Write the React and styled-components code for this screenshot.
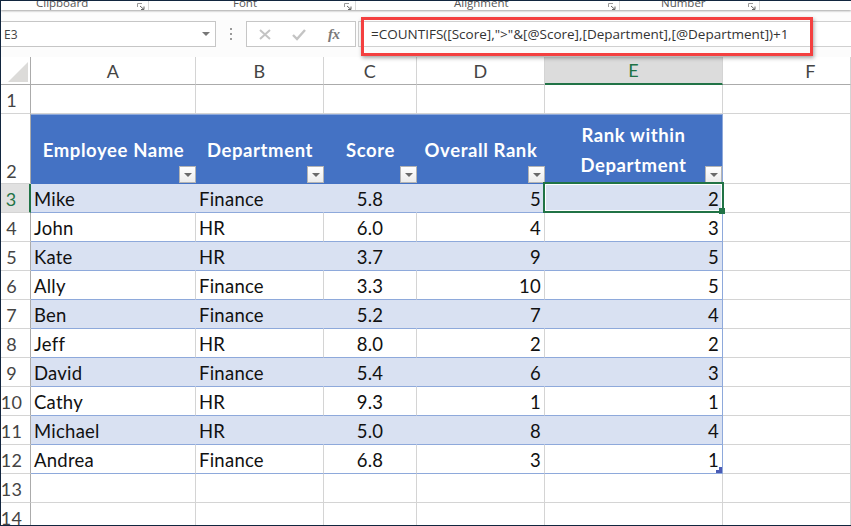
import React from "react";
import styled, { createGlobalStyle } from "styled-components";

const Global = createGlobalStyle`
  html, body { margin: 0; padding: 0; background: #fff; }
  body { font-family: "Lato", "Liberation Sans", sans-serif; }
`;

const Frame = styled.div`
  position: relative;
  width: 851px;
  height: 526px;
  box-sizing: border-box;
  border: 1px solid #12263f;
  border-right-width: 0;
  overflow: hidden;
  background: #fff;
  display: flex;
  flex-direction: column;
`;

const Ribbon = styled.div`
  height: 9px;
  flex: none;
  display: flex;
  overflow: hidden;
  background: #fff;
  box-shadow: 0 1px 2px rgba(0, 0, 0, 0.35);
  position: relative;
`;

const Group = styled.div`
  width: ${(p) => p.$w}px;
  flex: none;
  box-sizing: border-box;
  padding-left: ${(p) => p.$pl}px;
  padding-right: 3px;
  display: flex;
  align-items: flex-end;
  justify-content: space-between;
  border-right: 1px solid #dadada;
`;

const GroupLabel = styled.span`
  font: 11.5px/14px "Open Sans", sans-serif;
  color: #555;
  white-space: nowrap;
`;

const Launcher = styled.svg`
  width: 8px;
  height: 7px;
  flex: none;
`;

const FormulaBar = styled.div`
  height: 47px;
  flex: none;
  display: flex;
  align-items: center;
  background: #fcfcfc;
  padding-top: 1px;
  box-sizing: border-box;
`;

const NameBox = styled.div`
  width: 215px;
  height: 26px;
  box-sizing: border-box;
  border: 1px solid #c6c6c6;
  border-left: 0;
  background: #fff;
  display: flex;
  align-items: center;
  justify-content: space-between;
  padding: 0 5px 0 3px;
  font: 12px "Open Sans", sans-serif;
  color: #444;
  flex: none;
`;

const Caret = styled.span`
  width: 0;
  height: 0;
  border-left: 4px solid transparent;
  border-right: 4px solid transparent;
  border-top: 4px solid #777;
`;

const Grip = styled.div`
  width: 30px;
  flex: none;
  display: flex;
  flex-direction: column;
  align-items: center;
  gap: 3px;
  & > i {
    width: 2px;
    height: 2px;
    background: #9a9a9a;
    display: block;
  }
`;

const FxBox = styled.div`
  width: 110px;
  height: 26px;
  box-sizing: border-box;
  border: 1px solid #c6c6c6;
  background: #fff;
  display: flex;
  align-items: center;
  padding-left: 11px;
  gap: 20px;
  flex: none;
  & > svg { flex: none; }
`;

const FxLabel = styled.span`
  font: italic 700 15px "Liberation Serif", serif;
  color: #7a7a7a;
  margin-left: 2px;
  letter-spacing: -0.5px;
`;

const FormulaInput = styled.div`
  flex: 1;
  margin-left: 2px;
  height: 26px;
  box-sizing: border-box;
  border: 1px solid #d0d0d0;
  border-right: 0;
  background: #fff;
  display: flex;
  align-items: center;
  padding-left: 12px;
  font: 13.5px "Open Sans", sans-serif;
  color: #333;
  white-space: nowrap;
`;

const Callout = styled.div`
  position: absolute;
  left: 360px;
  top: 16px;
  width: 452px;
  height: 39px;
  box-sizing: border-box;
  border: 3px solid #f44040;
  box-shadow: 1px 2px 4px rgba(0, 0, 0, 0.35);
  pointer-events: none;
`;

const Sheet = styled.div`
  flex: 1;
  display: grid;
  grid-template-columns: 30px 165px 128px 93px 128px 178px 1fr;
  grid-template-rows: 28px 29px 70px repeat(12, 29px);
  background: #fff;
  overflow: hidden;
  font: 18.5px/1 "Lato", sans-serif;
  letter-spacing: 0.25px;
`;

const Cell = styled.div`
  box-sizing: border-box;
  position: relative;
  display: flex;
  align-items: center;
  justify-content: ${(p) => p.$align || "flex-start"};
  padding: 2px 3px 0;
  color: #111;
  border-right: 1px solid ${(p) => (p.$band ? "#d9e1f2" : "#d4d4d4")};
  border-bottom: 1px solid ${(p) => (p.$table ? "#8ea9db" : "#d4d4d4")};
  background: ${(p) => (p.$band ? "#d9e1f2" : "#fff")};
  ${(p) => p.$last && "border-right-color: #8ea9db;"}
`;

const ColHead = styled.div`
  box-sizing: border-box;
  display: flex;
  align-items: center;
  justify-content: center;
  padding-left: ${(p) => p.$pad || 0}px;
  color: ${(p) => (p.$active ? "#217346" : "#444")};
  background: ${(p) => (p.$active ? "#dcdcdc" : "#fff")};
  border-right: 1px solid #d4d4d4;
  border-bottom: ${(p) => (p.$active ? "2px solid #217346" : "1px solid #ababab")};
  font-size: 18px;
`;

const Corner = styled.div`
  box-sizing: border-box;
  border-right: 1px solid #ababab;
  border-bottom: 1px solid #ababab;
  display: flex;
  align-items: flex-end;
  justify-content: flex-end;
  padding: 0 2px 2px 0;
`;

const RowHead = styled.div`
  box-sizing: border-box;
  display: flex;
  align-items: ${(p) => (p.$bottom ? "flex-end" : "center")};
  justify-content: center;
  padding-right: 8px;
  padding-top: ${(p) => (p.$bottom ? "0" : "1px")};
  padding-bottom: ${(p) => (p.$bottom ? "3px" : "0")};
  color: ${(p) => (p.$active ? "#217346" : "#444")};
  background: ${(p) => (p.$active ? "#e1e1e1" : "#fff")};
  border-right: ${(p) => (p.$active ? "2px solid #217346" : "1px solid #ababab")};
  border-bottom: 1px solid #d4d4d4;
  font-size: 18px;
`;

const HeadCell = styled.div`
  box-sizing: border-box;
  position: relative;
  background: #4472c4;
  color: #fff;
  font-weight: 700;
  display: flex;
  align-items: center;
  justify-content: center;
  text-align: center;
  line-height: 30px;
  letter-spacing: 0.6px;
  border-top: 1px solid #8ea9db;
  ${(p) => p.$last && "border-right: 1px solid #8ea9db;"}
`;

const FilterButton = styled.span`
  position: absolute;
  right: 0;
  bottom: 1px;
  width: 17px;
  height: 17px;
  box-sizing: border-box;
  background: linear-gradient(#fff, #ececec);
  border: 1px solid #b4b4b4;
  display: flex;
  align-items: center;
  justify-content: center;
  &::after {
    content: "";
    border-left: 4.5px solid transparent;
    border-right: 4.5px solid transparent;
    border-top: 4.5px solid #6a6a6a;
  }
`;

const Selection = styled.div`
  position: absolute;
  z-index: 2;
  left: -2px;
  top: -2px;
  right: -2px;
  bottom: -1px;
  border: 2px solid #217346;
  box-shadow: inset 0 0 0 1px #fff;
  &::after {
    content: "";
    position: absolute;
    right: -3px;
    bottom: -3px;
    width: 6px;
    height: 6px;
    background: #217346;
  }
`;

const ResizeHandle = styled.svg`
  position: absolute;
  right: 0;
  bottom: 0;
  width: 6px;
  height: 6px;
`;

const CellText = styled.span`
  position: relative;
  z-index: 1;
`;

const columns = ["A", "B", "C", "D", "E", "F"];
const data = [
  ["Mike", "Finance", "5.8", 5, 2],
  ["John", "HR", "6.0", 4, 3],
  ["Kate", "HR", "3.7", 9, 5],
  ["Ally", "Finance", "3.3", 10, 5],
  ["Ben", "Finance", "5.2", 7, 4],
  ["Jeff", "HR", "8.0", 2, 2],
  ["David", "Finance", "5.4", 6, 3],
  ["Cathy", "HR", "9.3", 1, 1],
  ["Michael", "HR", "5.0", 8, 4],
  ["Andrea", "Finance", "6.8", 3, 1],
];
const groups = [
  { label: "Clipboard", w: 148, pl: 35 },
  { label: "Font", w: 207, pl: 84 },
  { label: "Alignment", w: 264, pl: 98 },
  { label: "Number", w: 140, pl: 41 },
];
const headers = ["Employee Name", "Department", "Score", "Overall Rank"];

const LauncherIcon = () => (
  <Launcher viewBox="0 0 8 7">
    <path d="M0.5 0.5H5M0.5 0.5V4" stroke="#999" fill="none" />
    <path d="M3 3L7 6.5M7 3.5V6.5H4" stroke="#666" fill="none" />
  </Launcher>
);

const EmptyRow = ({ n }) => (
  <>
    <RowHead>{n}</RowHead>
    {columns.map((c) => (
      <Cell key={c} />
    ))}
  </>
);

export default function App() {
  return (
    <Frame>
      <Global />
      <Ribbon>
        {groups.map((g) => (
          <Group key={g.label} $w={g.w} $pl={g.pl}>
            <GroupLabel>{g.label}</GroupLabel>
            <LauncherIcon />
          </Group>
        ))}
      </Ribbon>
      <FormulaBar>
        <NameBox>
          E3
          <Caret />
        </NameBox>
        <Grip>
          <i />
          <i />
          <i />
        </Grip>
        <FxBox>
          <svg width="14" height="13" viewBox="0 0 14 13">
            <path d="M2 2L12 11M12 2L2 11" stroke="#c4c4c4" strokeWidth="2" fill="none" />
          </svg>
          <svg width="14" height="13" viewBox="0 0 14 13">
            <path d="M1 7L5 11L13 2" stroke="#c4c4c4" strokeWidth="2.4" fill="none" />
          </svg>
          <FxLabel>fx</FxLabel>
        </FxBox>
        <FormulaInput>=COUNTIFS([Score],"&gt;"&amp;[@Score],[Department],[@Department])+1</FormulaInput>
      </FormulaBar>
      <Sheet>
        <Corner>
          <svg width="20" height="20" viewBox="0 0 20 20">
            <path d="M20 0V20H0Z" fill="#dcdbd9" />
          </svg>
        </Corner>
        {columns.map((c) => (
          <ColHead key={c} $active={c === "E"} $pad={c === "F" ? 48 : 0}>
            {c}
          </ColHead>
        ))}
        <EmptyRow n={1} />
        <RowHead $bottom>2</RowHead>
        {headers.map((h) => (
          <HeadCell key={h}>
            {h}
            <FilterButton />
          </HeadCell>
        ))}
        <HeadCell $last>
          Rank within
          <br />
          Department
          <FilterButton />
        </HeadCell>
        <Cell />
        {data.map((row, i) => {
          const band = i % 2 === 0;
          return (
            <React.Fragment key={row[0]}>
              <RowHead $active={i === 0}>{i + 3}</RowHead>
              <Cell $table $band={band}>
                <CellText>{row[0]}</CellText>
              </Cell>
              <Cell $table $band={band}>
                <CellText>{row[1]}</CellText>
              </Cell>
              <Cell $table $band={band} $align="center">
                <CellText>{row[2]}</CellText>
              </Cell>
              <Cell $table $band={band} $align="flex-end">
                <CellText>{row[3]}</CellText>
              </Cell>
              <Cell $table $band={band} $last $align="flex-end">
                <CellText>{row[4]}</CellText>
                {i === 0 && <Selection />}
                {i === data.length - 1 && (
                  <ResizeHandle viewBox="0 0 6 6">
                    <path d="M6 0V6H0V3H3V0Z" fill="#4a5bb5" />
                  </ResizeHandle>
                )}
              </Cell>
              <Cell />
            </React.Fragment>
          );
        })}
        <EmptyRow n={13} />
        <EmptyRow n={14} />
      </Sheet>
      <Callout />
    </Frame>
  );
}
